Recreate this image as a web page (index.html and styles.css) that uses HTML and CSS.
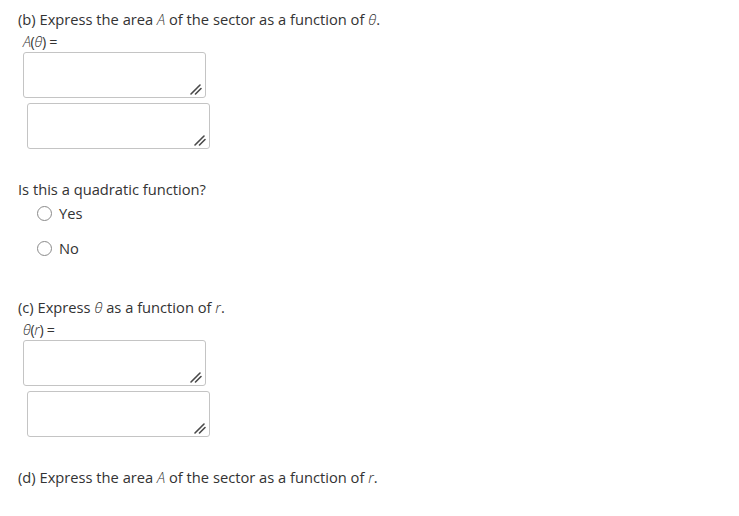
FILE: index.html
```html
<!DOCTYPE html>
<html>
<head>
<meta charset="utf-8">
<link rel="stylesheet" href="styles.css">
</head>
<body>
<div class="page">
  <section class="part">
    <p class="prompt">(b) Express the area <i>A</i> of the sector as a function of <i>θ</i>.</p>
    <div class="answer-label"><i>A</i>(<i>θ</i>) =</div>
    <div class="box-wrap box-first">
      <textarea class="box"></textarea>
      <svg class="grip" viewBox="0 0 12 12" width="12" height="12"><path d="M1 11 L10 2 M5.5 11 L11 5.5"/></svg>
    </div>
    <div class="box-wrap box-second">
      <textarea class="box"></textarea>
      <svg class="grip" viewBox="0 0 12 12" width="12" height="12"><path d="M1 11 L10 2 M5.5 11 L11 5.5"/></svg>
    </div>
  </section>

  <section class="question">
    <p class="prompt">Is this a quadratic function?</p>
    <label class="choice"><input type="radio" name="quad" class="radio"><span>Yes</span></label>
    <label class="choice"><input type="radio" name="quad" class="radio"><span>No</span></label>
  </section>

  <section class="part part-c">
    <p class="prompt">(c) Express <i>θ</i> as a function of <i>r</i>.</p>
    <div class="answer-label"><i>θ</i>(<i>r</i>) =</div>
    <div class="box-wrap box-first">
      <textarea class="box"></textarea>
      <svg class="grip" viewBox="0 0 12 12" width="12" height="12"><path d="M1 11 L10 2 M5.5 11 L11 5.5"/></svg>
    </div>
    <div class="box-wrap box-second">
      <textarea class="box"></textarea>
      <svg class="grip" viewBox="0 0 12 12" width="12" height="12"><path d="M1 11 L10 2 M5.5 11 L11 5.5"/></svg>
    </div>
  </section>

  <section class="part part-d">
    <p class="prompt">(d) Express the area <i>A</i> of the sector as a function of <i>r</i>.</p>
  </section>
</div>
</body>
</html>
```

FILE: styles.css
```css
html, body {
  margin: 0;
  padding: 0;
  background: #ffffff;
}
body {
  font-family: "Open Sans", "Liberation Sans", sans-serif;
  color: #333333;
  font-size: 14.7px;
}
.page {
  padding: 9px 0 0 18px;
}
.prompt {
  margin: 0;
  line-height: 20px;
  font-size: 14.7px;
}
.prompt i {
  font-weight: 300;
}
.answer-label {
  margin: 4px 0 0 5px;
  line-height: 18px;
  font-size: 14.3px;
  letter-spacing: -0.3px;
}
.answer-label i {
  font-weight: 300;
}
.box-wrap {
  position: relative;
  width: 183px;
  height: 46px;
}
.box {
  display: block;
  box-sizing: border-box;
  width: 183px;
  height: 46px;
  margin: 0;
  border: 1px solid #c4c4c4;
  border-radius: 3px;
  background: #fff;
  padding: 2px;
  resize: none;
  font-family: inherit;
}
.grip {
  position: absolute;
  right: 4px;
  bottom: 3px;
  fill: none;
  stroke: #4a4a4a;
  stroke-width: 1.6;
  stroke-linecap: round;
}
.box-first {
  margin: 1px 0 0 5px;
}
.box-second {
  margin: 5px 0 0 9px;
}
.question {
  margin-top: 30px;
}
.choice {
  display: flex;
  align-items: center;
  height: 22px;
  margin: 3px 0 0 19px;
  gap: 7px;
}
.choice + .choice {
  margin-top: 13px;
}
.radio {
  appearance: none;
  -webkit-appearance: none;
  margin: 0;
  width: 15px;
  height: 15px;
  border: 1px solid #8a8a8a;
  border-radius: 50%;
  background: #fff;
  box-sizing: border-box;
}
.part-c {
  margin-top: 38px;
}
.part-d {
  margin-top: 30px;
}
```
